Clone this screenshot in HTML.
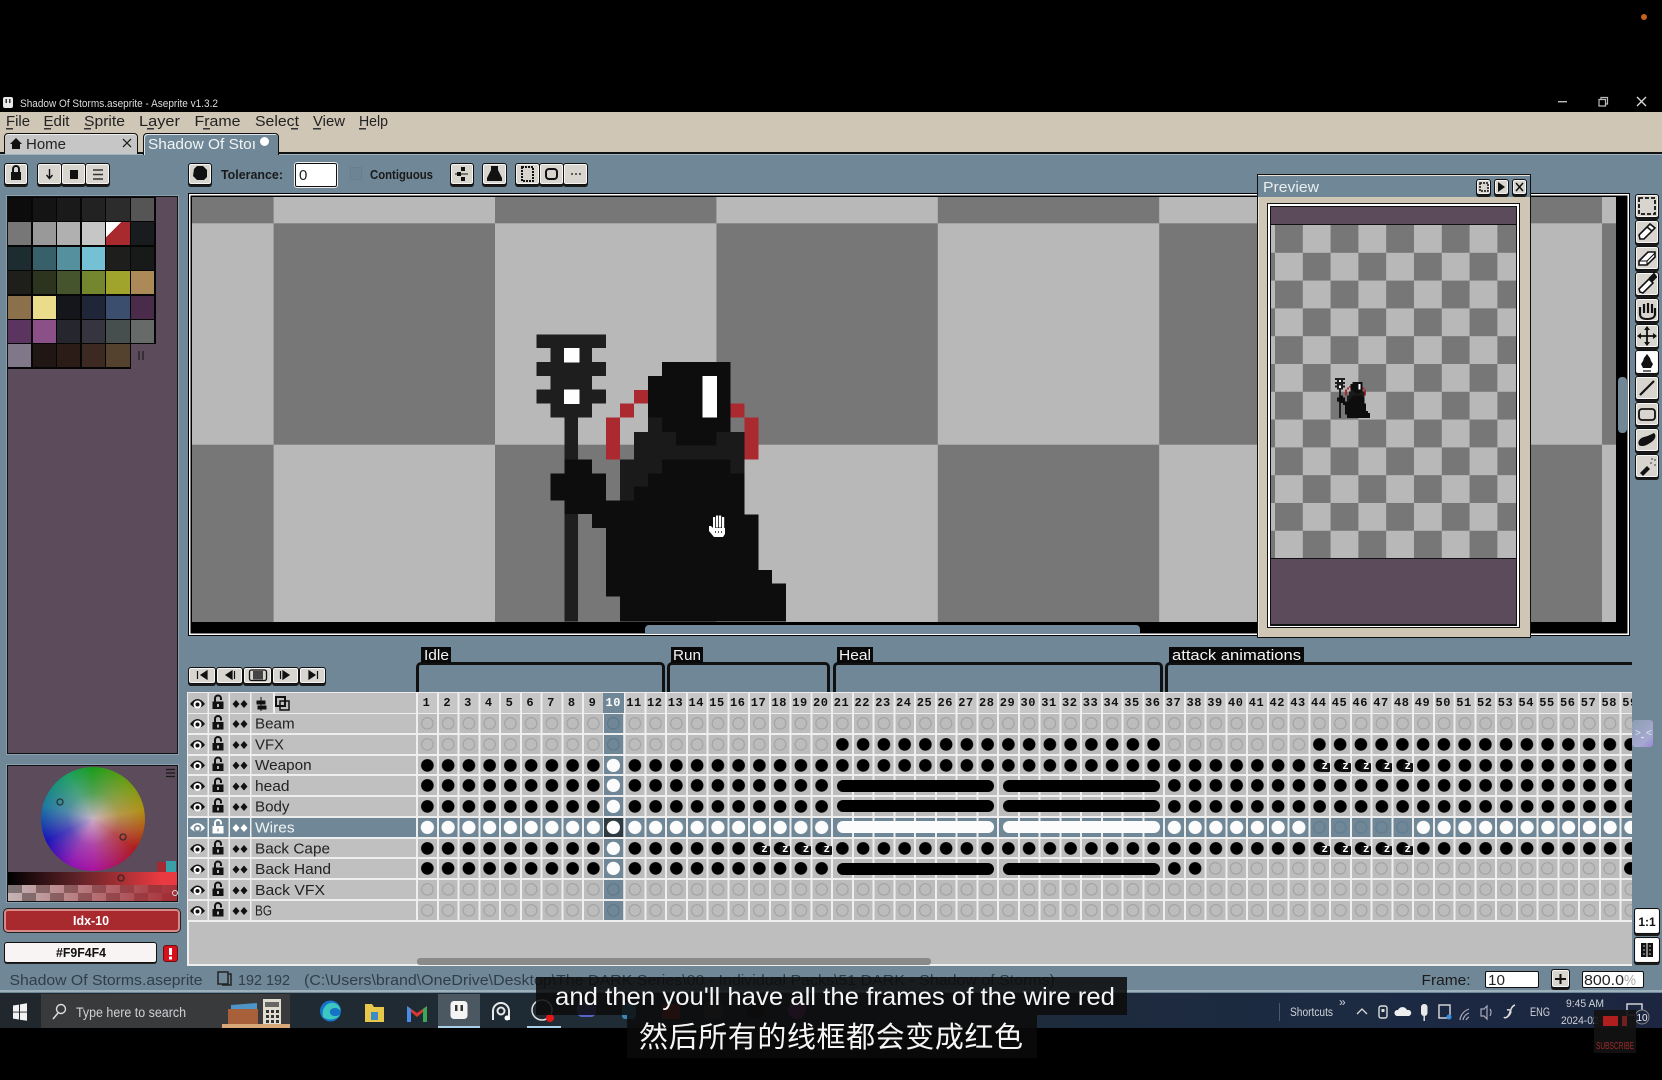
<!DOCTYPE html>
<html><head><meta charset="utf-8"><title>Aseprite</title>
<style>
html,body{margin:0;padding:0;background:#000;width:1662px;height:1080px;overflow:hidden}
#p{position:relative;width:1662px;height:1080px;overflow:hidden;background:#000}
#p div,#p i,#p b{position:absolute;box-sizing:border-box;display:block}
.btn{background:#d8d5cf;border:1px solid #111;border-radius:3px;box-shadow:inset 0 0 0 1px #f6f6f6,0 2px 0 #1a1a1a}
.sw{width:23.2px;height:23px}
.row{left:416.6px;width:1215.4px;height:18.8px;overflow:hidden;background:repeating-linear-gradient(90deg,#eee 0 1px,#bcbcbc 1px 19.75px,#eee 19.75px 20.75px)}
.row.sel{background:repeating-linear-gradient(90deg,#eee 0 1px,#6f8796 1px 19.75px,#eee 19.75px 20.75px)}
#p i.r{top:0;height:100%;background-size:20.75px 100%;background-repeat:repeat-x}
#p i.e{background-image:radial-gradient(circle at 10.37px 9.4px,transparent 5px,#a0a0a0 5.4px,#a0a0a0 6px,transparent 6.5px)}
#p i.f{background-image:radial-gradient(circle at 10.37px 9.4px,#000 6px,transparent 6.6px)}
#p i.w{background-image:radial-gradient(circle at 10.37px 9.4px,#fcfcfc 6.3px,transparent 6.9px)}
#p i.d{background-image:radial-gradient(circle at 10.37px 9.4px,transparent 5px,#5f7a8e 5.4px,#5f7a8e 6px,transparent 6.5px)}
#p i.c{left:187.75px;width:18.75px;height:100%;top:0;background-color:#6f8796}
#p i.c.ce{background-image:radial-gradient(circle at 9.37px 9.4px,transparent 5px,#5a7688 5.4px,#5a7688 6px,transparent 6.5px)}
#p i.c.cw{background-image:radial-gradient(circle at 9.37px 9.4px,#fcfcfc 6.3px,transparent 6.9px)}
#p i.c.ck{background-color:#2e3a40;background-image:radial-gradient(circle at 9.37px 9.4px,#fcfcfc 6.3px,transparent 6.9px)}
#p b.bar{top:3.4px;height:12px;border-radius:6px;background:#000}
#p b.bar.wb{background:#fcfcfc;height:12.6px;top:3.1px}
#p b.z{top:7.5px;width:10px;height:9px;background:#111;color:#fff;font:bold 11px/8px "Liberation Mono",monospace;text-align:center;border-radius:1px}
.lab{left:188px;width:227.5px;height:18.8px;background:linear-gradient(90deg,#c0c0c0 0 19.5px,#eee 19.5px 21px,#c0c0c0 21px 40.5px,#eee 40.5px 42px,#c0c0c0 42px 62px,#eee 62px 63.5px,#c0c0c0 63.5px)}
.lab.sel{background:linear-gradient(90deg,#6f8796 0 19.5px,#eee 19.5px 21px,#6f8796 21px 40.5px,#eee 40.5px 42px,#6f8796 42px 62px,#eee 62px 63.5px,#6f8796 63.5px)}
.tb{top:662px;height:30px;border:3px solid #111;border-bottom:0;border-radius:5px 5px 0 0}
.tag{top:647px;height:16px;background:#0a0a0a}
#nums{left:416.6px;top:693px;width:1215.4px;height:20px;overflow:hidden;display:flex!important;background:repeating-linear-gradient(90deg,#eee 0 1px,#c6c6c6 1px 19.75px,#eee 19.75px 20.75px);font:bold 12px/20px "Liberation Mono",monospace;color:#111}
#nums span{flex:0 0 20.75px;width:20.75px;text-align:center;letter-spacing:.5px;padding-right:1px;box-sizing:border-box}
svg text{font-family:"Liberation Sans",sans-serif}
</style></head><body><div id="p">

<!-- chrome -->
<div style="left:0;top:112px;width:1662px;height:41px;background:#cfc6b6"></div>
<div style="left:0;top:152px;width:1662px;height:1.5px;background:#111"></div>
<div style="left:0;top:153.5px;width:1662px;height:840px;background:#6f8796;border-top:1px solid #9fb3bf"></div>
<div style="left:0;top:990px;width:1662px;height:2px;background:#9eb2be"></div>
<div style="left:1641px;top:14px;width:6px;height:6px;border-radius:50%;background:#c8611d"></div>

<!-- tabs -->
<div style="left:4px;top:133px;width:134px;height:21px;background:#c6c6c6;border:1px solid #111;border-bottom:0;border-radius:4px 4px 0 0;box-shadow:inset 0 1px 0 #eee"></div>
<div style="left:143px;top:133px;width:136px;height:22px;background:#6f8796;border:1px solid #111;border-bottom:0;border-radius:4px 4px 0 0;box-shadow:inset 1px 1px 0 #dfe6ea"></div>
<div style="left:260px;top:137px;width:9px;height:9px;border-radius:50%;background:#fff"></div>

<!-- toolbar buttons -->
<div class="btn" style="left:4px;top:163px;width:24px;height:22px"></div>
<div class="btn" style="left:37px;top:163px;width:25px;height:22px"></div>
<div class="btn" style="left:61px;top:163px;width:25px;height:22px"></div>
<div class="btn" style="left:85px;top:163px;width:25px;height:22px"></div>
<div class="btn" style="left:188px;top:163px;width:24px;height:22px"></div>
<div style="left:295px;top:163px;width:42px;height:24px;background:#fff;border:1px solid #111;outline:1px solid #eee;border-radius:2px"></div>
<div style="left:350px;top:167px;width:12px;height:13px;background:#6c8494;border:1px solid #67808f"></div>
<div class="btn" style="left:450px;top:163px;width:24px;height:22px"></div>
<div class="btn" style="left:482px;top:163px;width:25px;height:22px"></div>
<div class="btn" style="left:515px;top:163px;width:25px;height:22px"></div>
<div class="btn" style="left:539px;top:163px;width:25px;height:22px"></div>
<div class="btn" style="left:563px;top:163px;width:25px;height:22px"></div>

<!-- palette -->
<div style="left:7px;top:196px;width:171px;height:558px;background:#5c4b5b;border:1px solid #111;box-shadow:0 0 0 1px #8aa0ae"></div>
<div style="left:8px;top:197px;width:147.5px;height:147px;background:#060606"></div>
<div style="left:8px;top:344px;width:123px;height:25px;background:#060606"></div>
<div class="sw" style="left:8px;top:198px;background:#0c0c0c"></div><div class="sw" style="left:32.6px;top:198px;background:#141414"></div><div class="sw" style="left:57.2px;top:198px;background:#1a1a1a"></div><div class="sw" style="left:81.8px;top:198px;background:#222"></div><div class="sw" style="left:106.4px;top:198px;background:#2c2c2c"></div><div class="sw" style="left:131px;top:198px;background:#555"></div>
<div class="sw" style="left:8px;top:222.4px;background:#777"></div><div class="sw" style="left:32.6px;top:222.4px;background:#999"></div><div class="sw" style="left:57.2px;top:222.4px;background:#b0b0b0"></div><div class="sw" style="left:81.8px;top:222.4px;background:#c6c6c6"></div><div class="sw" style="left:106.4px;top:222.4px;background:linear-gradient(135deg,#fff 0 32%,#a82a2e 33%)"></div><div class="sw" style="left:131px;top:222.4px;background:#181c1e"></div>
<div class="sw" style="left:8px;top:246.8px;background:#1c2c30"></div><div class="sw" style="left:32.6px;top:246.8px;background:#38606a"></div><div class="sw" style="left:57.2px;top:246.8px;background:#54909e"></div><div class="sw" style="left:81.8px;top:246.8px;background:#74c0d4"></div><div class="sw" style="left:106.4px;top:246.8px;background:#1e1e1c"></div><div class="sw" style="left:131px;top:246.8px;background:#181a1a"></div>
<div class="sw" style="left:8px;top:271.2px;background:#1e1e1a"></div><div class="sw" style="left:32.6px;top:271.2px;background:#2c3420"></div><div class="sw" style="left:57.2px;top:271.2px;background:#46542e"></div><div class="sw" style="left:81.8px;top:271.2px;background:#74862e"></div><div class="sw" style="left:106.4px;top:271.2px;background:#a0a42c"></div><div class="sw" style="left:131px;top:271.2px;background:#ac8a58"></div>
<div class="sw" style="left:8px;top:295.6px;background:#8c704c"></div><div class="sw" style="left:32.6px;top:295.6px;background:#eadc8a"></div><div class="sw" style="left:57.2px;top:295.6px;background:#14161c"></div><div class="sw" style="left:81.8px;top:295.6px;background:#1e2638"></div><div class="sw" style="left:106.4px;top:295.6px;background:#3c4e6e"></div><div class="sw" style="left:131px;top:295.6px;background:#4a2c4a"></div>
<div class="sw" style="left:8px;top:320px;background:#5c3460"></div><div class="sw" style="left:32.6px;top:320px;background:#8c5088"></div><div class="sw" style="left:57.2px;top:320px;background:#26262e"></div><div class="sw" style="left:81.8px;top:320px;background:#36343e"></div><div class="sw" style="left:106.4px;top:320px;background:#464e4e"></div><div class="sw" style="left:131px;top:320px;background:#666a68"></div>
<div class="sw" style="left:8px;top:344.4px;background:#807888"></div><div class="sw" style="left:32.6px;top:344.4px;background:#201614"></div><div class="sw" style="left:57.2px;top:344.4px;background:#2c1c18"></div><div class="sw" style="left:81.8px;top:344.4px;background:#3c2a22"></div><div class="sw" style="left:106.4px;top:344.4px;background:#54422e"></div>

<!-- colour wheel -->
<div style="left:7px;top:765px;width:171px;height:137px;background:#5c4b5b;border:1px solid #111;box-shadow:0 0 0 1px #8aa0ae"></div>
<div style="left:41px;top:767px;width:104px;height:104px;border-radius:50%;background:radial-gradient(circle,rgba(205,180,200,.95) 0,rgba(190,170,190,.35) 35%,rgba(190,170,190,0) 72%),conic-gradient(#189c18 0deg,#7a9c10 50deg,#b09010 80deg,#b01818 125deg,#a810a0 180deg,#9010b0 205deg,#1410b8 245deg,#1878a0 285deg,#18a060 330deg,#189c18 360deg)"></div>
<div style="left:157px;top:862px;width:9px;height:10px;background:#a22a30"></div>
<div style="left:166px;top:861px;width:10px;height:11px;background:#3aa0a8"></div>
<div style="left:8px;top:872px;width:169px;height:13px;background:linear-gradient(90deg,#000,#5c2226 40%,#e83a40 90%,#e83a40)"></div>
<div style="left:8px;top:885px;width:169px;height:8px;background:linear-gradient(90deg,rgba(165,40,48,0),rgba(165,40,48,.95)),repeating-linear-gradient(90deg,#7e7474 0 14px,#c4b4b4 14px 28px)"></div>
<div style="left:8px;top:893px;width:169px;height:8px;background:linear-gradient(90deg,rgba(165,40,48,0),rgba(165,40,48,.95)),repeating-linear-gradient(90deg,#c4b4b4 0 14px,#7e7474 14px 28px)"></div>
<div style="left:4px;top:909px;width:176px;height:23px;background:#a82a2e;border:2px solid #d88a88;outline:1px solid #222;border-radius:4px"></div>
<div style="left:4px;top:942px;width:153px;height:21px;background:#f9f4f4;border:1px solid #111;border-radius:3px;box-shadow:0 1px 0 #222"></div>
<div style="left:163px;top:945px;width:15px;height:17px;background:#d8101c;border:1px solid #611;border-radius:3px"></div>

<!-- canvas -->
<div style="left:188px;top:193px;width:1442px;height:443px;background:#000;border:1px solid #000;box-shadow:inset 0 0 0 1.5px #fff"></div>
<div style="left:192px;top:197px;width:1424px;height:425px;background-color:#b8b8b8;background-image:repeating-conic-gradient(#b8b8b8 0 25%,#777 0 50%);background-size:442.8px 442.8px;background-position:-139.8px -195.1px"></div>
<div style="left:645px;top:625px;width:495px;height:9px;background:#71899a;border-radius:4px 4px 0 0"></div>
<div style="left:1618px;top:377px;width:9px;height:56px;background:#6f8796;border-radius:4px"></div>

<!-- preview -->
<div style="left:1257px;top:174px;width:274px;height:464px;background:#cfc6b6;border:1px solid #111;box-shadow:inset 1px 1px 0 #e8e2d8"></div>
<div style="left:1258px;top:176px;width:272px;height:21px;background:#6f8796"></div>
<div class="btn" style="left:1476px;top:179px;width:15px;height:16px"></div>
<div class="btn" style="left:1494px;top:179px;width:15px;height:16px"></div>
<div class="btn" style="left:1512px;top:179px;width:15px;height:16px"></div>
<div style="left:1267px;top:203px;width:253px;height:425px;border:1px solid #111;box-shadow:inset 0 0 0 2px #fff;background:#fff"></div>
<div style="left:1270px;top:206px;width:247px;height:420px;background:#111"></div>
<div style="left:1271px;top:207px;width:245px;height:17px;background:#5c4b5b"></div>
<div style="left:1271px;top:225px;width:245px;height:333px;background-color:#b8b8b8;background-image:repeating-conic-gradient(#b8b8b8 0 25%,#777 0 50%);background-size:55.6px 55.6px;background-position:4px 0"></div>
<div style="left:1271px;top:559px;width:245px;height:65px;background:#5c4b5b"></div>

<!-- tool buttons -->
<div class="btn" style="left:1635px;top:194px;width:24px;height:24px"></div>
<div class="btn" style="left:1635px;top:220px;width:24px;height:24px"></div>
<div class="btn" style="left:1635px;top:246px;width:24px;height:24px"></div>
<div class="btn" style="left:1635px;top:272px;width:24px;height:24px"></div>
<div class="btn" style="left:1635px;top:298px;width:24px;height:24px"></div>
<div class="btn" style="left:1635px;top:324px;width:24px;height:24px"></div>
<div class="btn" style="left:1635px;top:350px;width:24px;height:24px;background:#fff"></div>
<div class="btn" style="left:1635px;top:376px;width:24px;height:24px"></div>
<div class="btn" style="left:1635px;top:402px;width:24px;height:24px"></div>
<div class="btn" style="left:1635px;top:428px;width:24px;height:24px"></div>
<div class="btn" style="left:1635px;top:454px;width:24px;height:24px"></div>

<!-- tags -->
<div class="tb" style="left:416px;width:249px"></div>
<div class="tb" style="left:667px;width:163px"></div>
<div class="tb" style="left:833px;width:330px"></div>
<div class="tb" style="left:1165px;width:467px;border-right:0;border-radius:5px 0 0 0"></div>
<div class="tag" style="left:421px;width:30px"></div>
<div class="tag" style="left:671px;width:32px"></div>
<div class="tag" style="left:837px;width:36px"></div>
<div class="tag" style="left:1169px;width:135px"></div>

<!-- play buttons -->
<div class="btn" style="left:188px;top:667px;width:28px;height:17px"></div>
<div class="btn" style="left:216px;top:667px;width:27px;height:17px"></div>
<div class="btn" style="left:243px;top:667px;width:29px;height:17px"></div>
<div class="btn" style="left:272px;top:667px;width:27px;height:17px"></div>
<div class="btn" style="left:299px;top:667px;width:27px;height:17px"></div>

<!-- timeline -->
<div style="left:187px;top:692px;width:1445px;height:274px;background:#eee"></div>
<div style="left:189px;top:922px;width:1443px;height:42px;background:#bebebe"></div>
<div style="left:417px;top:958px;width:514px;height:7px;background:#8a8a8a;border-radius:3px"></div>
<div class="lab" style="top:693px;height:20px"></div>
<div style="left:273px;top:693px;width:1.5px;height:20px;background:#eee"></div>
<div class="lab" style="top:714px"></div>
<div class="lab" style="top:734.8px"></div>
<div class="lab" style="top:755.5px"></div>
<div class="lab" style="top:776.3px"></div>
<div class="lab" style="top:797.1px"></div>
<div class="lab sel" style="top:817.8px"></div>
<div class="lab" style="top:838.6px"></div>
<div class="lab" style="top:859.4px"></div>
<div class="lab" style="top:880.1px"></div>
<div class="lab" style="top:900.9px"></div>

<div id="nums"><span>1</span><span>2</span><span>3</span><span>4</span><span>5</span><span>6</span><span>7</span><span>8</span><span>9</span><span style="background:#6f8796;color:#fff">10</span><span>11</span><span>12</span><span>13</span><span>14</span><span>15</span><span>16</span><span>17</span><span>18</span><span>19</span><span>20</span><span>21</span><span>22</span><span>23</span><span>24</span><span>25</span><span>26</span><span>27</span><span>28</span><span>29</span><span>30</span><span>31</span><span>32</span><span>33</span><span>34</span><span>35</span><span>36</span><span>37</span><span>38</span><span>39</span><span>40</span><span>41</span><span>42</span><span>43</span><span>44</span><span>45</span><span>46</span><span>47</span><span>48</span><span>49</span><span>50</span><span>51</span><span>52</span><span>53</span><span>54</span><span>55</span><span>56</span><span>57</span><span>58</span><span>59</span></div>

<!-- Beam -->
<div class="row" style="top:714px"><i class="r e" style="left:0;width:1224.25px"></i><i class="c ce"></i></div>
<!-- VFX -->
<div class="row" style="top:734.8px"><i class="r e" style="left:0;width:415px"></i><i class="r f" style="left:415px;width:332px"></i><i class="r e" style="left:747px;width:145.25px"></i><i class="r f" style="left:892.25px;width:332px"></i><i class="c ce"></i></div>
<!-- Weapon -->
<div class="row" style="top:755.5px"><i class="r f" style="left:0;width:1224.25px"></i><i class="c cw"></i><b class="z" style="left:903.25px">z</b><b class="z" style="left:924px">z</b><b class="z" style="left:944.75px">z</b><b class="z" style="left:965.5px">z</b><b class="z" style="left:986.25px">z</b></div>
<!-- head -->
<div class="row" style="top:776.3px"><i class="r f" style="left:0;width:415px"></i><b class="bar" style="left:420.1px;width:157.3px"></b><b class="bar" style="left:586.1px;width:157.3px"></b><i class="r f" style="left:747px;width:477.25px"></i><i class="c cw"></i></div>
<!-- Body -->
<div class="row" style="top:797.1px"><i class="r f" style="left:0;width:415px"></i><b class="bar" style="left:420.1px;width:157.3px"></b><b class="bar" style="left:586.1px;width:157.3px"></b><i class="r f" style="left:747px;width:477.25px"></i><i class="c cw"></i></div>
<!-- Wires -->
<div class="row sel" style="top:817.8px"><i class="r w" style="left:0;width:415px"></i><b class="bar wb" style="left:420.1px;width:157.3px"></b><b class="bar wb" style="left:586.1px;width:157.3px"></b><i class="r w" style="left:747px;width:145.25px"></i><i class="r d" style="left:892.25px;width:103.75px"></i><i class="r w" style="left:996px;width:228.25px"></i><i class="c ck"></i></div>
<!-- Back Cape -->
<div class="row" style="top:838.6px"><i class="r f" style="left:0;width:1224.25px"></i><i class="c cw"></i><b class="z" style="left:343px">z</b><b class="z" style="left:363.75px">z</b><b class="z" style="left:384.5px">z</b><b class="z" style="left:405.25px">z</b><b class="z" style="left:903.25px">z</b><b class="z" style="left:924px">z</b><b class="z" style="left:944.75px">z</b><b class="z" style="left:965.5px">z</b><b class="z" style="left:986.25px">z</b></div>
<!-- Back Hand -->
<div class="row" style="top:859.4px"><i class="r f" style="left:0;width:415px"></i><b class="bar" style="left:420.1px;width:157.3px"></b><b class="bar" style="left:586.1px;width:157.3px"></b><i class="r f" style="left:747px;width:41.5px"></i><i class="r e" style="left:788.5px;width:415px"></i><i class="r f" style="left:1203.5px;width:20.75px"></i><i class="c cw"></i></div>
<!-- Back VFX -->
<div class="row" style="top:880.1px"><i class="r e" style="left:0;width:1224.25px"></i><i class="c ce"></i></div>
<!-- BG -->
<div class="row" style="top:900.9px"><i class="r e" style="left:0;width:1224.25px"></i><i class="c ce"></i></div>

<div style="left:1632px;top:720px;width:21px;height:27px;border-radius:3px;background:linear-gradient(135deg,#8b9db0,#a6a9d0 70%,#9a86d8)"></div>
<div class="btn" style="left:1634px;top:908px;width:26px;height:26px;background:#fff"></div>
<div class="btn" style="left:1634px;top:937px;width:26px;height:26px;background:#fff"></div>

<!-- status inputs -->
<div style="left:1485px;top:971px;width:54px;height:17px;background:#fff;border:1px solid #111;border-radius:2px"></div>
<div class="btn" style="left:1551px;top:969px;width:19px;height:19px"></div>
<div style="left:1582px;top:971px;width:62px;height:17px;background:#fff;border:1px solid #111;border-radius:2px"></div>

<!-- taskbar -->
<div style="left:0;top:993px;width:1662px;height:35px;background:linear-gradient(90deg,#20282e 0,#1f2c36 40%,#1c2a42 80%,#1c2640 100%)"></div>
<div style="left:41px;top:994px;width:249px;height:34px;background:#383a3c"></div>
<div style="left:438px;top:994px;width:42px;height:34px;background:#4b5862"></div>
<div style="left:438px;top:1026px;width:42px;height:2px;background:#a8d0e8"></div>
<div style="left:527px;top:1026px;width:34px;height:2px;background:#a8d0e8"></div>

<svg width="1662" height="1080" viewBox="0 0 1662 1080" style="position:absolute;left:0;top:0" xmlns="http://www.w3.org/2000/svg">
<defs>
<symbol id="spr" viewBox="0 0 900 930">
<g shape-rendering="crispEdges">
<g fill="#1e1e1e"><rect x="110" y="44" width="208" height="40"/><rect x="152" y="84" width="124" height="208"/><rect x="110" y="126" width="208" height="42"/><rect x="110" y="208" width="208" height="42"/><rect x="194" y="292" width="40" height="613"/></g>
<g fill="#fff"><rect x="192" y="84" width="46" height="44"/><rect x="192" y="208" width="46" height="44"/></g>
<g fill="#ab2a30"><rect x="402" y="210" width="42" height="40"/><rect x="360" y="250" width="42" height="42"/><rect x="318" y="292" width="42" height="126"/><rect x="360" y="418" width="42" height="42"/><rect x="692" y="250" width="42" height="42"/><rect x="734" y="292" width="42" height="126"/></g>
<path fill="#1a1a1a" d="M444 292H486V336H734V460H692V418H486V460H444V500H402V542H360V418H402V336H444Z"/>
<path fill="#0d0d0d" d="M486 126H692V336H650V376H528V336H486V292H444V168H486Z"/>
<path fill="#0d0d0d" d="M486 418H692V460H734V584H776V750H816V790H858V905H360V830H318V624H276V582H194V542H152V460H194V418H276V460H318V542H402V500H444V460H486Z"/>
<rect x="608" y="168" width="43" height="124" fill="#fff"/>
</g>
</symbol>
<symbol id="eye" viewBox="0 0 14 13" overflow="visible"><path d="M-.5 7Q7-3 14.500 7 7 15 -.5 7Z" fill="currentColor"/><circle cx="7" cy="7.500" r="4" fill="#fff"/><circle cx="7" cy="7.500" r="2" fill="currentColor"/></symbol>
<symbol id="lock" viewBox="0 0 12 14" overflow="visible"><path d="M3 7V3.500a3 3 0 0 1 6 0V5" fill="none" stroke="currentColor" stroke-width="2"/><rect x="0.500" y="6.500" width="11" height="7.500" fill="currentColor"/><rect x="5" y="9" width="2" height="3" fill="#bbb"/></symbol>
<symbol id="dots" viewBox="0 0 16 8" overflow="visible"><path d="M4 0 7.500 4 4 8 .5 4ZM12 0 15.500 4 12 8 8.500 4Z" fill="currentColor"/></symbol>
</defs>

<!-- window title -->
<rect x="3" y="97" width="10" height="11" rx="2" fill="#e8e8e8"/><rect x="5.500" y="99" width="1.500" height="4" fill="#333"/><rect x="9" y="99" width="1.500" height="4" fill="#333"/>
<text x="20" y="107" font-size="11" fill="#ddd" textLength="198" lengthAdjust="spacingAndGlyphs">Shadow Of Storms.aseprite - Aseprite v1.3.2</text>
<rect x="1558" y="101" width="9" height="1.400" fill="#bbb"/>
<path d="M1599 99.500h6.500v6.500h-6.500zM1601 99.500v-2h6.500v6.500h-2" fill="none" stroke="#bbb" stroke-width="1.200"/>
<path d="M1637 97 1646 106M1646 97 1637 106" stroke="#ddd" stroke-width="1.300"/>

<!-- menu -->
<g font-size="15" fill="#222">
<text x="6" y="126" textLength="24" lengthAdjust="spacingAndGlyphs">File</text>
<text x="43.500" y="126" textLength="26" lengthAdjust="spacingAndGlyphs">Edit</text>
<text x="84" y="126" textLength="41" lengthAdjust="spacingAndGlyphs">Sprite</text>
<text x="139" y="126" textLength="41" lengthAdjust="spacingAndGlyphs">Layer</text>
<text x="194.500" y="126" textLength="46" lengthAdjust="spacingAndGlyphs">Frame</text>
<text x="255" y="126" textLength="44" lengthAdjust="spacingAndGlyphs">Select</text>
<text x="313" y="126" textLength="32" lengthAdjust="spacingAndGlyphs">View</text>
<text x="359" y="126" textLength="29" lengthAdjust="spacingAndGlyphs">Help</text>
</g>
<g fill="#333"><rect x="6" y="128" width="7" height="1.500"/><rect x="44" y="128" width="7" height="1.500"/><rect x="84" y="128" width="7" height="1.500"/><rect x="147" y="128" width="7" height="1.500"/><rect x="203" y="128" width="7" height="1.500"/><rect x="291" y="128" width="7" height="1.500"/><rect x="313" y="128" width="8" height="1.500"/><rect x="359" y="128" width="7" height="1.500"/></g>

<!-- tabs text -->
<path d="M10 144l6-6 6 6h-2v5h-8v-5z" fill="#111"/>
<text x="26" y="149" font-size="15" fill="#222" textLength="40" lengthAdjust="spacingAndGlyphs">Home</text>
<path d="M123 139l8 8M131 139l-8 8" stroke="#222" stroke-width="1.300"/>
<text x="148" y="149" font-size="15" fill="#f2f5f6" textLength="108" lengthAdjust="spacingAndGlyphs">Shadow Of Stoı</text>

<!-- toolbar icons -->
<rect x="11" y="172" width="10" height="8" fill="#111"/><path d="M13 172v-3a3 3 0 0 1 6 0v3" fill="none" stroke="#111" stroke-width="2"/>
<path d="M49.500 169v9M46.500 175l3 3.500 3-3.500" fill="none" stroke="#111" stroke-width="1.400"/>
<rect x="70" y="170" width="8" height="9" fill="#111"/>
<path d="M93 170h10M93 174.500h10M93 179h10" stroke="#333" stroke-width="1.400"/>
<path d="M194 169l3-3h6l4 4v7l-3 3h-7l-4-4z" fill="#111"/>
<text x="221" y="179" font-size="13" font-weight="bold" fill="#1a1a1a" textLength="62" lengthAdjust="spacingAndGlyphs">Tolerance:</text>
<text x="299" y="180" font-size="15" fill="#222">0</text>
<text x="370" y="179" font-size="13" font-weight="bold" fill="#1a1a1a" textLength="63" lengthAdjust="spacingAndGlyphs">Contiguous</text>
<path d="M461 167h4v4h-4zM457 172h4v4h-4zM461 177h4v4h-4z" fill="#111"/><path d="M455 174h13" stroke="#111"/>
<path d="M491 166h7v4l4 8v3h-15v-3l4-8z" fill="#111"/>
<rect x="522" y="167" width="11" height="14" fill="none" stroke="#111" stroke-width="2" stroke-dasharray="2 1"/>
<rect x="546" y="169" width="11" height="10" rx="3" fill="none" stroke="#111" stroke-width="2"/>
<path d="M571 174h2M575 174h2M579 174h2" stroke="#333" stroke-width="1.500"/>

<!-- palette grip -->
<path d="M139 351v9M143 351v9" stroke="#222" stroke-width="1.300"/>

<!-- sprite -->
<use href="#spr" x="500" y="320" width="300" height="310"/>
<!-- hand cursor -->
<g fill="#fff"><rect x="713" y="517" width="2.200" height="12"/><rect x="716" y="515.500" width="2.200" height="12"/><rect x="719" y="515.500" width="2.200" height="12"/><rect x="722" y="517" width="2.200" height="12"/><path d="M709 526h2l2 2h12v6l-2 3h-9l-5-6z"/></g>
<path d="M715 532h1M718 532h1M721 532h1" stroke="#222" stroke-width="1.500"/>

<!-- preview title -->
<text x="1263" y="192" font-size="15" fill="#e8eef0" textLength="56" lengthAdjust="spacingAndGlyphs">Preview</text>
<rect x="1480" y="183" width="8" height="8" fill="none" stroke="#111" stroke-width="1.500" stroke-dasharray="2 1"/>
<path d="M1498 182l7 5-7 5z" fill="#111"/>
<path d="M1516 183l7 8M1523 183l-7 8" stroke="#111" stroke-width="1.500"/>
<use href="#spr" x="1330" y="376" width="42" height="43.400"/>

<!-- tool icons -->
<g fill="none" stroke="#111" stroke-width="2">
<rect x="1639" y="198" width="16" height="16" stroke-dasharray="4 2" stroke-width="1.800"/>
<path d="M1640 239l-1-4 11-11 5 4-11 11zM1647 227l5 4" fill="#fff" stroke-width="1.600"/>
<path d="M1639 261l9-9h7v5l-8 8h-8z" fill="#fff" stroke-width="1.600"/><path d="M1639 261h8v4M1647 261l8-8" stroke-width="1.100"/>
<path d="M1640 292l-1-3 10-10 4 4-10 10z" fill="#fff" stroke-width="1.600"/><path d="M1650 278l4-4 2 3-4 4z" fill="#111"/>
<path d="M1640 315v-8M1644 313v-9M1648 313v-10M1652 313v-9M1655 315v-7" stroke-width="2.200"/><path d="M1640 314c0 4 3 5 7 5s8-1 8-5" stroke-width="2"/>
<path d="M1647 327v18M1638 336h18" stroke-width="1.800"/><path d="M1647 326l-3 4h6zM1647 346l-3-4h6zM1637 336l4-3v6zM1657 336l-4-3v6z" fill="#111" stroke="none"/>
<path d="M1640 395l14-14" stroke-width="2.200"/>
<rect x="1639" y="409" width="16" height="11" rx="3" stroke-width="1.800"/>
</g>
<path d="M1647 354l3 4 1 3 2 3-2 4h-8l-2-4 2-3 1-3z" fill="#111"/><path d="M1643 371h8" stroke="#111" stroke-width="1.200"/>
<path d="M1639 445c-2-3 1-7 5-8 4-1 6-2 10-4 3 3 1 7-4 10-4 3-9 4-11 2z" fill="#111"/>
<path d="M1640 473l7-7 3 3-7 7z" fill="#111"/>
<g fill="#888"><rect x="1650" y="462" width="2" height="2"/><rect x="1654" y="459" width="2" height="2"/><rect x="1654" y="464" width="2" height="2"/><rect x="1651" y="458" width="2" height="2"/></g>

<!-- tags text -->
<g font-size="14.500" fill="#f4f4f4">
<text x="424" y="660" textLength="25" lengthAdjust="spacingAndGlyphs">Idle</text>
<text x="673" y="660" textLength="28" lengthAdjust="spacingAndGlyphs">Run</text>
<text x="839" y="660" textLength="32" lengthAdjust="spacingAndGlyphs">Heal</text>
<text x="1172" y="660" textLength="129" lengthAdjust="spacingAndGlyphs">attack animations</text>
</g>

<!-- play icons -->
<path d="M197.500 671v8M207 671l-6 4 6 4z" fill="#111" stroke="#111" stroke-width="1.200"/>
<path d="M232 671l-6 4 6 4zM234.500 671v8" fill="#111" stroke="#111" stroke-width="1.200"/>
<rect x="253" y="671" width="10" height="8.500" fill="#444"/><rect x="249.500" y="670" width="17" height="10.500" rx="2" fill="none" stroke="#111" stroke-width="1.300"/>
<path d="M283 671l6 4-6 4zM280.500 671v8" fill="#111" stroke="#111" stroke-width="1.200"/>
<path d="M309 671l6 4-6 4zM317.500 671v8" fill="#111" stroke="#111" stroke-width="1.200"/>

<!-- layer icons -->
<g color="#111">
<use href="#eye" x="190.500" y="697" width="14" height="13"/><use href="#lock" x="212" y="695" width="12" height="14"/><use href="#dots" x="232" y="700" width="16" height="8"/>
<use href="#eye" x="190.500" y="717" width="14" height="13"/><use href="#lock" x="212" y="715.500" width="12" height="14"/><use href="#dots" x="232" y="720" width="16" height="8"/>
<use href="#eye" x="190.500" y="738" width="14" height="13"/><use href="#lock" x="212" y="736.500" width="12" height="14"/><use href="#dots" x="232" y="741" width="16" height="8"/>
<use href="#eye" x="190.500" y="758.500" width="14" height="13"/><use href="#lock" x="212" y="757" width="12" height="14"/><use href="#dots" x="232" y="761.500" width="16" height="8"/>
<use href="#eye" x="190.500" y="779.500" width="14" height="13"/><use href="#lock" x="212" y="778" width="12" height="14"/><use href="#dots" x="232" y="782.500" width="16" height="8"/>
<use href="#eye" x="190.500" y="800" width="14" height="13"/><use href="#lock" x="212" y="798.500" width="12" height="14"/><use href="#dots" x="232" y="803" width="16" height="8"/>
<use href="#eye" x="190.500" y="842" width="14" height="13"/><use href="#lock" x="212" y="840.500" width="12" height="14"/><use href="#dots" x="232" y="845" width="16" height="8"/>
<use href="#eye" x="190.500" y="862.500" width="14" height="13"/><use href="#lock" x="212" y="861" width="12" height="14"/><use href="#dots" x="232" y="865.500" width="16" height="8"/>
<use href="#eye" x="190.500" y="883.500" width="14" height="13"/><use href="#lock" x="212" y="882" width="12" height="14"/><use href="#dots" x="232" y="886.500" width="16" height="8"/>
<use href="#eye" x="190.500" y="904" width="14" height="13"/><use href="#lock" x="212" y="902.500" width="12" height="14"/><use href="#dots" x="232" y="907" width="16" height="8"/>
</g>
<path d="M190 828Q197.500 818 205 828 197.500 836 190 828Z" fill="#fff"/><circle cx="197.500" cy="828.500" r="3.800" fill="#6f8796"/><circle cx="197.500" cy="828.500" r="2" fill="#fff"/>
<g color="#fff"><use href="#lock" x="212" y="819.500" width="12" height="14"/><use href="#dots" x="232" y="824" width="16" height="8"/></g>
<path d="M261 697v14M257 701h8v3h-8zM258 706h8v3h-8z" fill="#111" stroke="#111"/>
<rect x="276" y="697" width="9" height="9" fill="none" stroke="#111" stroke-width="2"/><rect x="280" y="701" width="9" height="9" fill="none" stroke="#111" stroke-width="1.500"/>

<!-- layer names -->
<g font-size="15" fill="#222">
<text x="255" y="728.500" textLength="39.600" lengthAdjust="spacingAndGlyphs">Beam</text>
<text x="255" y="749.500" textLength="29" lengthAdjust="spacingAndGlyphs">VFX</text>
<text x="255" y="770" textLength="56.600" lengthAdjust="spacingAndGlyphs">Weapon</text>
<text x="255" y="791" textLength="34.500" lengthAdjust="spacingAndGlyphs">head</text>
<text x="255" y="811.500" textLength="34.500" lengthAdjust="spacingAndGlyphs">Body</text>
<text x="255" y="832.500" textLength="39.600" lengthAdjust="spacingAndGlyphs" fill="#f2f5f6">Wires</text>
<text x="255" y="853.500" textLength="75" lengthAdjust="spacingAndGlyphs">Back Cape</text>
<text x="255" y="874" textLength="76" lengthAdjust="spacingAndGlyphs">Back Hand</text>
<text x="255" y="895" textLength="70" lengthAdjust="spacingAndGlyphs">Back VFX</text>
<text x="255" y="915.500" textLength="17" lengthAdjust="spacingAndGlyphs">BG</text>
</g>

<!-- wheel markers -->
<g fill="none" stroke="#222" stroke-width="1.300" opacity=".8"><circle cx="60" cy="802" r="3"/><circle cx="123" cy="837" r="3"/><circle cx="121" cy="878" r="3"/></g>
<circle cx="175" cy="893" r="2.500" fill="none" stroke="#ddd"/>
<path d="M166 769.500h9M166 773h9M166 776.500h9" stroke="#1a1a1a" stroke-width="1.300"/>
<text x="91" y="925" font-size="13" font-weight="bold" fill="#fff" text-anchor="middle" textLength="36" lengthAdjust="spacingAndGlyphs">Idx-10</text>
<text x="81" y="957" font-size="13" font-weight="bold" fill="#111" text-anchor="middle" textLength="50" lengthAdjust="spacingAndGlyphs">#F9F4F4</text>
<rect x="169" y="948" width="3" height="7" fill="#fff"/><rect x="169" y="956.500" width="3" height="3" fill="#fff"/>

<!-- 1:1 + film -->
<text x="1647" y="926" font-size="12" font-weight="bold" fill="#111" text-anchor="middle">1:1</text>
<rect x="1641" y="943" width="12" height="14" fill="#111"/><path d="M1647 943v14" stroke="#fff"/><path d="M1643 946h2M1643 950h2M1643 954h2M1649 946h2M1649 950h2M1649 954h2" stroke="#bbb"/>
<text x="1635" y="736" font-size="10" fill="#dfe4f2">&gt;</text><text x="1646" y="736" font-size="10" fill="#dfe4f2">&lt;</text><path d="M1641 737q1.500 1.500 3 0" stroke="#dfe4f2" fill="none"/>

<!-- status bar -->
<g font-size="14.500" fill="#2f3e4a">
<text x="9.500" y="985" textLength="193" lengthAdjust="spacingAndGlyphs">Shadow Of Storms.aseprite</text>
<text x="238" y="985" textLength="52" lengthAdjust="spacingAndGlyphs">192 192</text>
<text x="304" y="985" textLength="751" lengthAdjust="spacingAndGlyphs">(C:\Users\brand\OneDrive\Desktop\The DARK Series\00 - Individual Packs\51 DARK - Shadow of Storms)</text>
<text x="1421.500" y="985" textLength="49" lengthAdjust="spacingAndGlyphs" fill="#1a1a1a">Frame:</text>
<text x="1488" y="985" textLength="17" lengthAdjust="spacingAndGlyphs" fill="#222">10</text>
<text x="1584" y="985" textLength="40" lengthAdjust="spacingAndGlyphs" fill="#222">800.0</text>
<text x="1624" y="985" textLength="12" lengthAdjust="spacingAndGlyphs" fill="#aaa">%</text>
</g>
<path d="M218 972h10v12h-10zM228 974h3v11h-9" fill="none" stroke="#222" stroke-width="1.500"/>
<path d="M1555 979h11M1560.500 974v10" stroke="#111" stroke-width="2"/>

<!-- taskbar -->
<g fill="#f2f2f2"><path d="M13 1005.500l6-.9v7h-6zM20 1004.400l7-1.100v8.300h-7zM13 1012.500h6v7l-6-.9zM20 1012.500h7v8.300l-7-1.100z"/></g>
<circle cx="61" cy="1009" r="4.500" fill="none" stroke="#ddd" stroke-width="1.400"/><path d="M58 1013l-5 6" stroke="#ddd" stroke-width="1.500"/>
<text x="76" y="1017" font-size="13.500" fill="#cfd2d4" textLength="110" lengthAdjust="spacingAndGlyphs">Type here to search</text>
<rect x="228" y="1009" width="30" height="16" fill="#a8603a"/><path d="M231 1005l26-2v6h-26z" fill="#4f94c6"/><rect x="263" y="999" width="18" height="26" fill="#e0dcd0"/><rect x="265" y="1002" width="14" height="5" fill="#666"/><path d="M266 1010h3v3h-3zM271 1010h3v3h-3zM276 1010h3v3h-3zM266 1015h3v3h-3zM271 1015h3v3h-3zM276 1015h3v3h-3zM266 1020h3v3h-3zM271 1020h3v3h-3zM276 1020h3v3h-3z" fill="#333"/><rect x="222" y="1024" width="68" height="4" fill="#d8a878"/>
<circle cx="330.500" cy="1011" r="10.500" fill="#1674c8"/><path d="M323 1017c5 4 13 3 17-2-5 2-9 1-10-2-1-3 2-5 5-5 3 0 5 2 5.500 3 0-6-6-9-10-8-6 1-9 8-7.500 14z" fill="#3cc8c0"/>
<path d="M365 1004h7l2 3h10v15h-19z" fill="#e8c84a"/><rect x="371" y="1012" width="7" height="8" fill="#3c8ac8"/>
<path d="M407 1022v-16l10 7 10-7v16h-4v-10l-6 5-6-5v10z" fill="#d83a30"/><path d="M407 1006v16h4v-13z" fill="#4a8ae8"/><path d="M427 1006v16h-4v-13z" fill="#3aa858"/>
<rect x="450.500" y="1001" width="17" height="18" rx="3.500" fill="#f4f4f4"/><rect x="455" y="1005" width="2.500" height="6" fill="#333"/><rect x="460.500" y="1005" width="2.500" height="6" fill="#333"/>
<path d="M493 1020v-9a8 8 0 1 1 16 0v9" fill="none" stroke="#e8e8e8" stroke-width="2"/><circle cx="501" cy="1011" r="3.500" fill="none" stroke="#e8e8e8" stroke-width="2"/><circle cx="507" cy="1018" r="2.500" fill="#fff"/>
<circle cx="542" cy="1010" r="10" fill="none" stroke="#ddd" stroke-width="1.500"/><circle cx="550" cy="1018" r="4" fill="#e01818"/>
<rect x="577" y="1002" width="19" height="15" rx="5" fill="#5865c8"/>
<rect x="622" y="1003" width="14" height="16" rx="3" fill="#3a86b8"/>
<rect x="662" y="1004" width="18" height="15" rx="2" fill="#a03030"/>
<rect x="704" y="1002" width="18" height="17" rx="3" fill="#444"/>
<circle cx="755" cy="1010" r="9" fill="#1a1a1a"/>
<circle cx="797" cy="1010" r="9" fill="#7a3a8a"/>

<!-- tray -->
<g fill="#cfd4da">
<text x="1290" y="1016" font-size="11.500" textLength="43" lengthAdjust="spacingAndGlyphs">Shortcuts</text>
<text x="1339" y="1006" font-size="12">»</text>
<text x="1530" y="1016" font-size="11.500" textLength="20" lengthAdjust="spacingAndGlyphs">ENG</text>
<text x="1566" y="1007" font-size="11" textLength="38" lengthAdjust="spacingAndGlyphs">9:45 AM</text>
<text x="1561" y="1024" font-size="11" textLength="41" lengthAdjust="spacingAndGlyphs">2024-02-</text>
</g>
<rect x="1279" y="1003" width="1" height="18" fill="#4a5a6a"/>
<path d="M1357 1014l5-5 5 5" fill="none" stroke="#ddd" stroke-width="1.300"/>
<rect x="1379" y="1006" width="8" height="12" rx="2" fill="none" stroke="#ddd" stroke-width="1.400"/><rect x="1381.500" y="1009" width="3" height="3" fill="#ddd"/>
<path d="M1397 1016a3 3 0 0 1 1-6 5 5 0 0 1 9 0 3 3 0 0 1 2 6z" fill="#eee"/>
<rect x="1421" y="1004" width="6.500" height="12" rx="3" fill="#e8e8e8"/><path d="M1424.200 1016v5" stroke="#ddd" stroke-width="1.500"/>
<rect x="1439" y="1005" width="11" height="13" fill="none" stroke="#ddd" stroke-width="1.400"/><circle cx="1449" cy="1017" r="2.500" fill="#3a90e0"/>
<path d="M1460 1020q1-8 9-11M1463 1020q1-5 6-7M1466 1020q1-2 3-3" fill="none" stroke="#aab" stroke-width="1.200"/>
<path d="M1481 1009h3l3-3v13l-3-3h-3zM1490 1009q2 3 0 7" fill="none" stroke="#aab" stroke-width="1.200"/>
<path d="M1505 1018c3-1 4-3 5-6s2-6 5-7M1507 1010c3-1 5 1 3 4s-5 5-6 3" fill="none" stroke="#ddd" stroke-width="1.500"/>
<rect x="1627" y="1004" width="15" height="11" fill="none" stroke="#ddd" stroke-width="1.400"/>
<circle cx="1642" cy="1017" r="7" fill="#1c2640" stroke="#888"/>
<text x="1642" y="1021" font-size="10" fill="#eee" text-anchor="middle">10</text>

<!-- subscribe overlay -->
<rect x="1594" y="1010" width="42" height="43" fill="#141212" opacity=".92"/>
<rect x="1603" y="1016" width="15" height="10" fill="#b01e1e"/><rect x="1622" y="1016" width="5" height="10" fill="#702020"/>
<text x="1615" y="1049" font-size="10" fill="#9e2a2a" text-anchor="middle" textLength="38" lengthAdjust="spacingAndGlyphs">SUBSCRIBE</text>

<!-- subtitles -->
<rect x="536" y="977" width="591" height="38" fill="#0a0a0a" opacity=".86"/>
<rect x="627" y="1015" width="410" height="43" fill="#0a0a0a" opacity=".86"/>
<text x="555" y="1005" font-size="25" fill="#f5f5f5" textLength="560" lengthAdjust="spacingAndGlyphs">and then you'll have all the frames of the wire red</text>
<text x="639" y="1047" font-size="29" fill="#f5f5f5" textLength="384" style="font-family:'Liberation Sans','Noto Sans CJK SC',sans-serif">然后所有的线框都会变成红色</text>
</svg>
</div></body></html>
